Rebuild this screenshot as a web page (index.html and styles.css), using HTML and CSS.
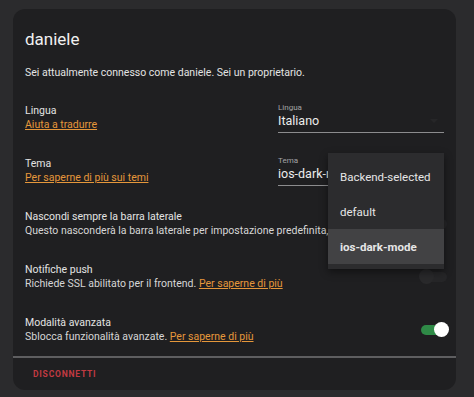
FILE: index.html
```html
<!DOCTYPE html>
<html lang="it">
<head>
    <meta charset="UTF-8">
    <meta name="viewport" content="width=device-width, initial-scale=1.0">
    <title>Profilo - daniele</title>
    <link rel="stylesheet" href="styles.css">
</head>
<body>
    <div class="card">
        <h1 class="card-title">daniele</h1>
        <p class="intro">Sei attualmente connesso come daniele. Sei un proprietario.</p>

        <div class="row">
            <div class="info">
                <div class="heading">Lingua</div>
                <a class="link" href="#">Aiuta a tradurre</a>
            </div>
            <div class="select">
                <span class="select-label">Lingua</span>
                <span class="select-value">Italiano</span>
                <span class="select-arrow"></span>
            </div>
        </div>

        <div class="row">
            <div class="info">
                <div class="heading">Tema</div>
                <a class="link" href="#">Per saperne di più sui temi</a>
            </div>
            <div class="select">
                <span class="select-label">Tema</span>
                <span class="select-value">ios-dark-mode</span>
                <span class="select-arrow"></span>
            </div>
        </div>

        <div class="row">
            <div class="info">
                <div class="heading">Nascondi sempre la barra laterale</div>
                <div class="desc">Questo nasconderà la barra laterale per impostazione predefinita, in modo simile</div>
            </div>
            <div class="toggle hidden-under"><span class="thumb"></span></div>
        </div>

        <div class="row">
            <div class="info">
                <div class="heading">Notifiche push</div>
                <div class="desc">Richiede SSL abilitato per il frontend. <a class="link" href="#">Per saperne di più</a></div>
            </div>
            <div class="toggle disabled"><span class="thumb"></span></div>
        </div>

        <div class="row">
            <div class="info">
                <div class="heading">Modalità avanzata</div>
                <div class="desc">Sblocca funzionalità avanzate. <a class="link" href="#">Per saperne di più</a></div>
            </div>
            <div class="toggle on"><span class="thumb"></span></div>
        </div>

        <div class="actions">
            <a class="logout" href="#">Disconnetti</a>
        </div>

        <ul class="menu">
            <li class="menu-item">Backend-selected</li>
            <li class="menu-item">default</li>
            <li class="menu-item selected">ios-dark-mode</li>
        </ul>
    </div>
</body>
</html>
```

FILE: styles.css
```css
body {
    margin: 0;
    background-color: #2b2b2d;
    font-family: Roboto, "Noto Sans", sans-serif;
    color: #e3e3e3;
}
.card {
    position: relative;
    width: 443px;
    height: 381px;
    margin: 9px 0 0 13px;
    background-color: #1f1f21;
    border-radius: 12px;
    display: flex;
    flex-direction: column;
    overflow: hidden;
}
.card-title {
    margin: 0;
    padding: 20px 12px 0;
    font-size: 17px;
    line-height: 20px;
    font-weight: 400;
    color: #f0f0f0;
}
.intro {
    margin: 17px 12px 11px;
    font-size: 10.5px;
    line-height: 14px;
}
.row {
    height: 53px;
    padding: 0 12px;
    display: flex;
    align-items: center;
    justify-content: space-between;
}
.info {
    flex: 1;
    min-width: 0;
    font-size: 10.5px;
    line-height: 14px;
}
.heading {
    white-space: nowrap;
}
.desc {
    white-space: nowrap;
    color: #d6d6d6;
}
.link {
    color: #e5973b;
    text-decoration: underline;
    text-underline-offset: 1px;
}
.select {
    position: relative;
    width: 166px;
    flex-shrink: 0;
    display: flex;
    flex-direction: column;
    padding-bottom: 3px;
    border-bottom: 1.5px solid #8c8c8e;
}
.select-label {
    font-size: 8px;
    line-height: 10px;
    color: #a3a3a5;
}
.select-value {
    font-size: 12.5px;
    line-height: 16px;
    color: #ececec;
}
.select-arrow {
    position: absolute;
    right: 6px;
    bottom: 9px;
    border-left: 4px solid transparent;
    border-right: 4px solid transparent;
    border-top: 4px solid #262628;
}
.toggle {
    position: relative;
    width: 26px;
    height: 10px;
    margin-right: -3px;
    border-radius: 5px;
    background-color: #4a4a4c;
    flex-shrink: 0;
}
.toggle .thumb {
    position: absolute;
    left: -2px;
    top: -2.5px;
    width: 15px;
    height: 15px;
    border-radius: 50%;
    background-color: #d0d0d0;
}
.toggle.hidden-under {
    background-color: #262628;
}
.toggle.disabled {
    background-color: #262628;
}
.toggle.disabled .thumb {
    background-color: #29292b;
}
.toggle.on {
    background-color: #2f8a47;
}
.toggle.on .thumb {
    left: 13px;
    background-color: #ffffff;
}
.actions {
    flex: 1;
    border-top: 2px solid #5e5e60;
    padding: 0 20px;
    display: flex;
    align-items: center;
}
.logout {
    color: #c23a41;
    font-size: 8.5px;
    font-weight: 700;
    letter-spacing: 0.8px;
    text-transform: uppercase;
    text-decoration: none;
}
.menu {
    position: absolute;
    left: 315px;
    top: 144px;
    width: 116px;
    margin: 0;
    padding: 6px 0 5px;
    list-style: none;
    background-color: #2c2c2e;
    box-shadow: 0 3px 8px rgba(0, 0, 0, 0.45);
    z-index: 2;
}
.menu-item {
    height: 35px;
    padding: 0 12px;
    display: flex;
    align-items: center;
    font-size: 11.5px;
    white-space: nowrap;
    color: #e6e6e6;
}
.menu-item.selected {
    background-color: #424244;
    font-weight: 700;
}
```
